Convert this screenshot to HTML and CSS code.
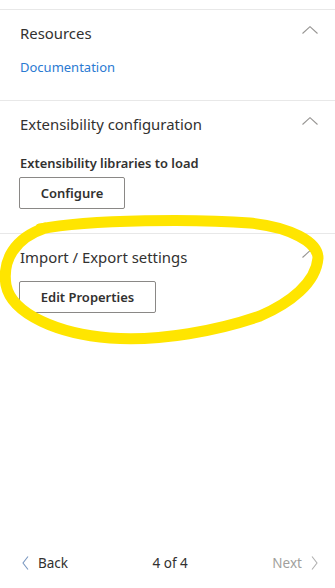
FILE: index.html
```html
<!DOCTYPE html>
<html>
<head>
<meta charset="utf-8">
<link rel="stylesheet" href="styles.css">
</head>
<body>
<div class="page">
  <div class="panel">
    <section class="section s1">
      <div class="head">
        <span class="title">Resources</span>
        <svg class="chev" width="16" height="8" viewBox="0 0 16 8"><path d="M0.5 7.5 L8 0.7 L15.5 7.5" fill="none" stroke="#979593" stroke-width="1.1"/></svg>
      </div>
      <a class="link" href="#">Documentation</a>
    </section>
    <section class="section s2">
      <div class="head">
        <span class="title">Extensibility configuration</span>
        <svg class="chev" width="16" height="8" viewBox="0 0 16 8"><path d="M0.5 7.5 L8 0.7 L15.5 7.5" fill="none" stroke="#979593" stroke-width="1.1"/></svg>
      </div>
      <div class="label">Extensibility libraries to load</div>
      <button class="btn btn-config">Configure</button>
    </section>
    <section class="section s3">
      <div class="head">
        <span class="title">Import / Export settings</span>
        <svg class="chev" width="16" height="8" viewBox="0 0 16 8"><path d="M0.5 7.5 L8 0.7 L15.5 7.5" fill="none" stroke="#979593" stroke-width="1.1"/></svg>
      </div>
      <button class="btn btn-edit">Edit Properties</button>
    </section>
  </div>
  <div class="footer">
    <div class="nav back">
      <svg width="7" height="14" viewBox="0 0 7 14"><path d="M6 0.5 L1 7 L6 13.5" fill="none" stroke="#7a98c0" stroke-width="1.1"/></svg>
      <span>Back</span>
    </div>
    <div class="count">4 of 4</div>
    <div class="nav next">
      <span>Next</span>
      <svg width="7" height="14" viewBox="0 0 7 14"><path d="M1 0.5 L6 7 L1 13.5" fill="none" stroke="#b0b0b0" stroke-width="1.1"/></svg>
    </div>
  </div>
  <svg class="marker" width="335" height="588" viewBox="0 0 335 588">
    <path d="M 40 229 C 90 219, 200 219, 250 223 C 290 227, 318 242, 318 258 C 316 283, 290 303, 260 316 C 220 330, 160 342, 110 338 C 60 334, 12 315, 6 285 C 2 260, 15 238, 45 228" fill="none" stroke="#ffe500" stroke-width="11" stroke-linecap="round"/>
  </svg>
</div>
</body>
</html>
```

FILE: styles.css
```css
html, body {
  margin: 0;
  padding: 0;
  background: #ffffff;
}
body {
  font-family: "Noto Sans", "Open Sans", sans-serif;
  color: #323130;
}
.page {
  position: relative;
  width: 335px;
  height: 588px;
  display: flex;
  flex-direction: column;
  overflow: hidden;
}
.panel {
  padding-top: 9px;
}
.section {
  border-top: 1px solid #e8e8e8;
  padding: 13px 17px 0 20px;
  display: flex;
  flex-direction: column;
  align-items: flex-start;
}
.head {
  align-self: stretch;
  display: flex;
  justify-content: space-between;
  align-items: center;
  height: 20px;
}
.title {
  font-size: 14.9px;
  line-height: 20px;
  color: #323130;
}
.chev {
  margin-top: -7px;
}
.s1 { padding-bottom: 23px; }
.s2 { padding-bottom: 24px; }
.link {
  margin-top: 14px;
  font-size: 13px;
  line-height: 20px;
  color: #2a7ad2;
  text-decoration: none;
}
.label {
  margin-top: 20px;
  font-size: 12.9px;
  line-height: 18px;
  font-weight: 600;
  color: #323130;
}
.btn {
  margin-left: -1px;
  height: 32px;
  box-sizing: border-box;
  border: 1px solid #8a8886;
  border-radius: 2px;
  background: #ffffff;
  font-family: "Noto Sans", "Open Sans", sans-serif;
  font-size: 13px;
  font-weight: 600;
  color: #323130;
  padding: 0;
}
.btn-config {
  margin-top: 5px;
  width: 106px;
}
.btn-edit {
  margin-top: 14px;
  width: 137px;
}
.footer {
  margin-top: auto;
  height: 40px;
  margin-bottom: 5px;
  display: flex;
  align-items: center;
  justify-content: space-between;
  padding: 0 17px 0 22px;
  font-size: 13.5px;
}
.nav {
  display: flex;
  align-items: center;
  gap: 9px;
}
.back span { color: #323130; }
.next span { color: #a19f9d; }
.count {
  color: #323130;
}
.marker {
  position: absolute;
  left: 0;
  top: 0;
  pointer-events: none;
}
```
